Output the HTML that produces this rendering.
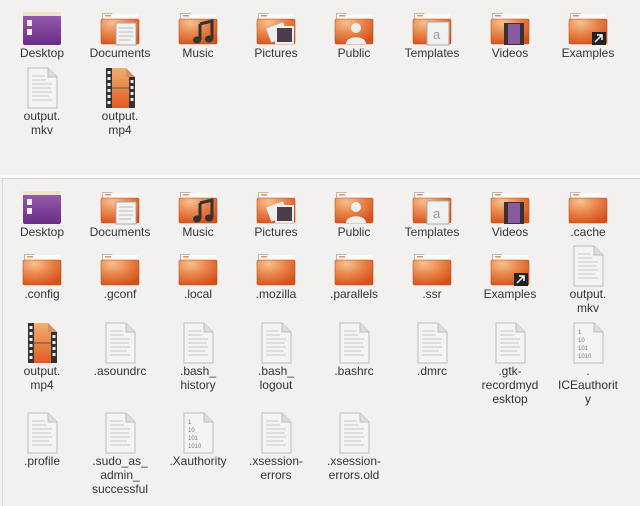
<!DOCTYPE html>
<html><head><meta charset="utf-8"><style>
body{margin:0;width:640px;height:505px;background:#f2f1f0;font-family:"Liberation Sans",sans-serif;position:relative;overflow:hidden}
.top{position:absolute;left:0;top:0;width:640px;height:175px;background:#f2f1f0}
.sep{position:absolute;left:0;top:175px;width:640px;height:3px;background:#fff}
.bot{position:absolute;left:2px;top:178px;width:638px;height:327px;background:#f2f1f0;border-left:1px solid #d8d6d3;border-top:1px solid #d0cecb}
.it{position:absolute;width:80px;text-align:center;font-size:12px;line-height:14px;color:#333}
.ic{height:44px;display:flex;justify-content:center;align-items:flex-end}
svg{display:block}
</style></head><body>
<svg width="0" height="0" style="position:absolute">
<defs>
<radialGradient id="og" cx="0.3" cy="0.15" r="0.9"><stop offset="0" stop-color="#f7c08e"/><stop offset="0.5" stop-color="#e8844a"/><stop offset="1" stop-color="#d5521c"/></radialGradient>
<linearGradient id="pg" x1="0" y1="0" x2="0" y2="1"><stop offset="0" stop-color="#9a5fb0"/><stop offset="1" stop-color="#6a2d86"/></linearGradient>
<linearGradient id="fg" x1="0" y1="0" x2="0" y2="1"><stop offset="0" stop-color="#f0b070"/><stop offset="1" stop-color="#e05a20"/></linearGradient>
<symbol id="folder" viewBox="0 0 44 36"><path d="M4 3h10l1 1h25v8H4z" fill="#bdb8b0"/><rect x="5" y="4" width="35" height="7" fill="#fbfaf8"/><rect x="7" y="5" width="6" height="1.5" fill="#e8905a"/><rect x="3" y="9" width="38" height="25" rx="1.5" fill="url(#og)" stroke="#b8551f" stroke-width="0.6"/></symbol>
<symbol id="desk" viewBox="0 0 44 36"><rect x="3" y="2" width="38" height="33" rx="2" fill="url(#pg)"/><rect x="3" y="2" width="38" height="4" fill="#ece3c8"/><rect x="7" y="10" width="5" height="6" fill="#eee"/><rect x="7" y="19" width="5" height="6" fill="#eee"/></symbol>
<symbol id="doc" viewBox="0 0 32 42"><path d="M2 1h20l9 9v31H2z" fill="#f4f4f4" stroke="#bdbdbd"/><path d="M22 1v9h9" fill="#ddd" stroke="#bdbdbd"/><g stroke="#c8c8c8"><path d="M6 9h13M6 13h14M6 17h20M6 21h19M6 25h20M6 29h17M6 33h20"/></g></symbol>
<symbol id="bin" viewBox="0 0 32 42"><path d="M2 1h20l9 9v31H2z" fill="#f4f4f4" stroke="#bdbdbd"/><path d="M22 1v9h9" fill="#ddd" stroke="#bdbdbd"/><text x="6" y="12" font-size="6" fill="#777" font-family="Liberation Sans">1</text><text x="6" y="20" font-size="6" fill="#777" font-family="Liberation Sans">10</text><text x="6" y="28" font-size="6" fill="#777" font-family="Liberation Sans">101</text><text x="6" y="36" font-size="6" fill="#777" font-family="Liberation Sans">1010</text></symbol>
<symbol id="vid" viewBox="0 0 32 42"><path d="M2 1h20l9 9v31H2z" fill="url(#fg)"/><rect x="2" y="1" width="6" height="40" fill="#333"/><rect x="25" y="10" width="6" height="31" fill="#333"/><path d="M22 1l9 9h-9z" fill="#d49060"/><path d="M8 21h17" stroke="#555"/><g fill="#eee"><rect x="3.5" y="4" width="3" height="3"/><rect x="3.5" y="10" width="3" height="3"/><rect x="3.5" y="16" width="3" height="3"/><rect x="3.5" y="22" width="3" height="3"/><rect x="3.5" y="28" width="3" height="3"/><rect x="3.5" y="34" width="3" height="3"/><rect x="26.5" y="13" width="3" height="3"/><rect x="26.5" y="19" width="3" height="3"/><rect x="26.5" y="25" width="3" height="3"/><rect x="26.5" y="31" width="3" height="3"/></g></symbol>
</defs></svg>
<div class="top"></div><div class="sep"></div><div class="bot"></div>

<div class="it" style="left:2px;top:2px"><div class="ic"><svg width="44" height="36"><use href="#desk"/></svg></div>Desktop</div>
<div class="it" style="left:80px;top:2px"><div class="ic"><svg width="44" height="36"><use href="#folder"/><rect x="18" y="13" width="20" height="22" fill="#f2f2f2" stroke="#aaa"/><path d="M21 18h14M21 22h14M21 26h14M21 30h12" stroke="#bbb"/></svg></div>Documents</div>
<div class="it" style="left:158px;top:2px"><div class="ic"><svg width="44" height="36"><use href="#folder"/><path d="M24 14l12-3v18" stroke="#333" stroke-width="3" fill="none"/><path d="M24 14v16" stroke="#333" stroke-width="3"/><ellipse cx="21" cy="30" rx="4" ry="3.5" fill="#333"/><ellipse cx="33" cy="29" rx="4" ry="3.5" fill="#333"/></svg></div>Music</div>
<div class="it" style="left:236px;top:2px"><div class="ic"><svg width="44" height="36"><use href="#folder"/><rect x="14" y="15" width="18" height="15" fill="#eee" transform="rotate(-20 23 22)"/><rect x="21" y="16" width="19" height="18" fill="#eee"/><rect x="23" y="18" width="15" height="14" fill="#4a3e4a"/></svg></div>Pictures</div>
<div class="it" style="left:314px;top:2px"><div class="ic"><svg width="44" height="36"><use href="#folder"/><circle cx="24" cy="18" r="5" fill="#eee"/><path d="M14 34c0-9 20-9 20 0z" fill="#eee"/></svg></div>Public</div>
<div class="it" style="left:392px;top:2px"><div class="ic"><svg width="44" height="36"><use href="#folder"/><rect x="17" y="12" width="22" height="23" fill="#f0f0f0" stroke="#aaa"/><text x="23" y="29" font-size="13" fill="#999" font-family="Liberation Sans">a</text></svg></div>Templates</div>
<div class="it" style="left:470px;top:2px"><div class="ic"><svg width="44" height="36"><use href="#folder"/><rect x="16" y="13" width="20" height="22" fill="#333"/><rect x="20" y="14" width="12" height="20" fill="#8a5aa0"/></svg></div>Videos</div>
<div class="it" style="left:548px;top:2px"><div class="ic"><svg width="44" height="36"><use href="#folder"/><rect x="26" y="22" width="14" height="13" fill="#222"/><path d="M29 32l7-7M31 25h5v5" stroke="#fff" stroke-width="1.5" fill="none"/></svg></div>Examples</div>
<div class="it" style="left:2px;top:65px"><div class="ic"><svg width="34" height="42"><use href="#doc"/></svg></div>output.<br>mkv</div>
<div class="it" style="left:80px;top:65px"><div class="ic"><svg width="34" height="42"><use href="#vid"/></svg></div>output.<br>mp4</div>

<div class="it" style="left:2px;top:181px"><div class="ic"><svg width="44" height="36"><use href="#desk"/></svg></div>Desktop</div>
<div class="it" style="left:80px;top:181px"><div class="ic"><svg width="44" height="36"><use href="#folder"/><rect x="18" y="13" width="20" height="22" fill="#f2f2f2" stroke="#aaa"/><path d="M21 18h14M21 22h14M21 26h14M21 30h12" stroke="#bbb"/></svg></div>Documents</div>
<div class="it" style="left:158px;top:181px"><div class="ic"><svg width="44" height="36"><use href="#folder"/><path d="M24 14l12-3v18" stroke="#333" stroke-width="3" fill="none"/><path d="M24 14v16" stroke="#333" stroke-width="3"/><ellipse cx="21" cy="30" rx="4" ry="3.5" fill="#333"/><ellipse cx="33" cy="29" rx="4" ry="3.5" fill="#333"/></svg></div>Music</div>
<div class="it" style="left:236px;top:181px"><div class="ic"><svg width="44" height="36"><use href="#folder"/><rect x="14" y="15" width="18" height="15" fill="#eee" transform="rotate(-20 23 22)"/><rect x="21" y="16" width="19" height="18" fill="#eee"/><rect x="23" y="18" width="15" height="14" fill="#4a3e4a"/></svg></div>Pictures</div>
<div class="it" style="left:314px;top:181px"><div class="ic"><svg width="44" height="36"><use href="#folder"/><circle cx="24" cy="18" r="5" fill="#eee"/><path d="M14 34c0-9 20-9 20 0z" fill="#eee"/></svg></div>Public</div>
<div class="it" style="left:392px;top:181px"><div class="ic"><svg width="44" height="36"><use href="#folder"/><rect x="17" y="12" width="22" height="23" fill="#f0f0f0" stroke="#aaa"/><text x="23" y="29" font-size="13" fill="#999" font-family="Liberation Sans">a</text></svg></div>Templates</div>
<div class="it" style="left:470px;top:181px"><div class="ic"><svg width="44" height="36"><use href="#folder"/><rect x="16" y="13" width="20" height="22" fill="#333"/><rect x="20" y="14" width="12" height="20" fill="#8a5aa0"/></svg></div>Videos</div>
<div class="it" style="left:548px;top:181px"><div class="ic"><svg width="44" height="36"><use href="#folder"/></svg></div>.cache</div>

<div class="it" style="left:2px;top:243px"><div class="ic"><svg width="44" height="36"><use href="#folder"/></svg></div>.config</div>
<div class="it" style="left:80px;top:243px"><div class="ic"><svg width="44" height="36"><use href="#folder"/></svg></div>.gconf</div>
<div class="it" style="left:158px;top:243px"><div class="ic"><svg width="44" height="36"><use href="#folder"/></svg></div>.local</div>
<div class="it" style="left:236px;top:243px"><div class="ic"><svg width="44" height="36"><use href="#folder"/></svg></div>.mozilla</div>
<div class="it" style="left:314px;top:243px"><div class="ic"><svg width="44" height="36"><use href="#folder"/></svg></div>.parallels</div>
<div class="it" style="left:392px;top:243px"><div class="ic"><svg width="44" height="36"><use href="#folder"/></svg></div>.ssr</div>
<div class="it" style="left:470px;top:243px"><div class="ic"><svg width="44" height="36"><use href="#folder"/><rect x="26" y="22" width="14" height="13" fill="#222"/><path d="M29 32l7-7M31 25h5v5" stroke="#fff" stroke-width="1.5" fill="none"/></svg></div>Examples</div>
<div class="it" style="left:548px;top:243px"><div class="ic"><svg width="34" height="42"><use href="#doc"/></svg></div>output.<br>mkv</div>

<div class="it" style="left:2px;top:320px"><div class="ic"><svg width="34" height="42"><use href="#vid"/></svg></div>output.<br>mp4</div>
<div class="it" style="left:80px;top:320px"><div class="ic"><svg width="34" height="42"><use href="#doc"/></svg></div>.asoundrc</div>
<div class="it" style="left:158px;top:320px"><div class="ic"><svg width="34" height="42"><use href="#doc"/></svg></div>.bash_<br>history</div>
<div class="it" style="left:236px;top:320px"><div class="ic"><svg width="34" height="42"><use href="#doc"/></svg></div>.bash_<br>logout</div>
<div class="it" style="left:314px;top:320px"><div class="ic"><svg width="34" height="42"><use href="#doc"/></svg></div>.bashrc</div>
<div class="it" style="left:392px;top:320px"><div class="ic"><svg width="34" height="42"><use href="#doc"/></svg></div>.dmrc</div>
<div class="it" style="left:470px;top:320px"><div class="ic"><svg width="34" height="42"><use href="#doc"/></svg></div>.gtk-<br>recordmyd<br>esktop</div>
<div class="it" style="left:548px;top:320px"><div class="ic"><svg width="34" height="42"><use href="#bin"/></svg></div>.<br>ICEauthorit<br>y</div>

<div class="it" style="left:2px;top:410px"><div class="ic"><svg width="34" height="42"><use href="#doc"/></svg></div>.profile</div>
<div class="it" style="left:80px;top:410px"><div class="ic"><svg width="34" height="42"><use href="#doc"/></svg></div>.sudo_as_<br>admin_<br>successful</div>
<div class="it" style="left:158px;top:410px"><div class="ic"><svg width="34" height="42"><use href="#bin"/></svg></div>.Xauthority</div>
<div class="it" style="left:236px;top:410px"><div class="ic"><svg width="34" height="42"><use href="#doc"/></svg></div>.xsession-<br>errors</div>
<div class="it" style="left:314px;top:410px"><div class="ic"><svg width="34" height="42"><use href="#doc"/></svg></div>.xsession-<br>errors.old</div>
</body></html>
